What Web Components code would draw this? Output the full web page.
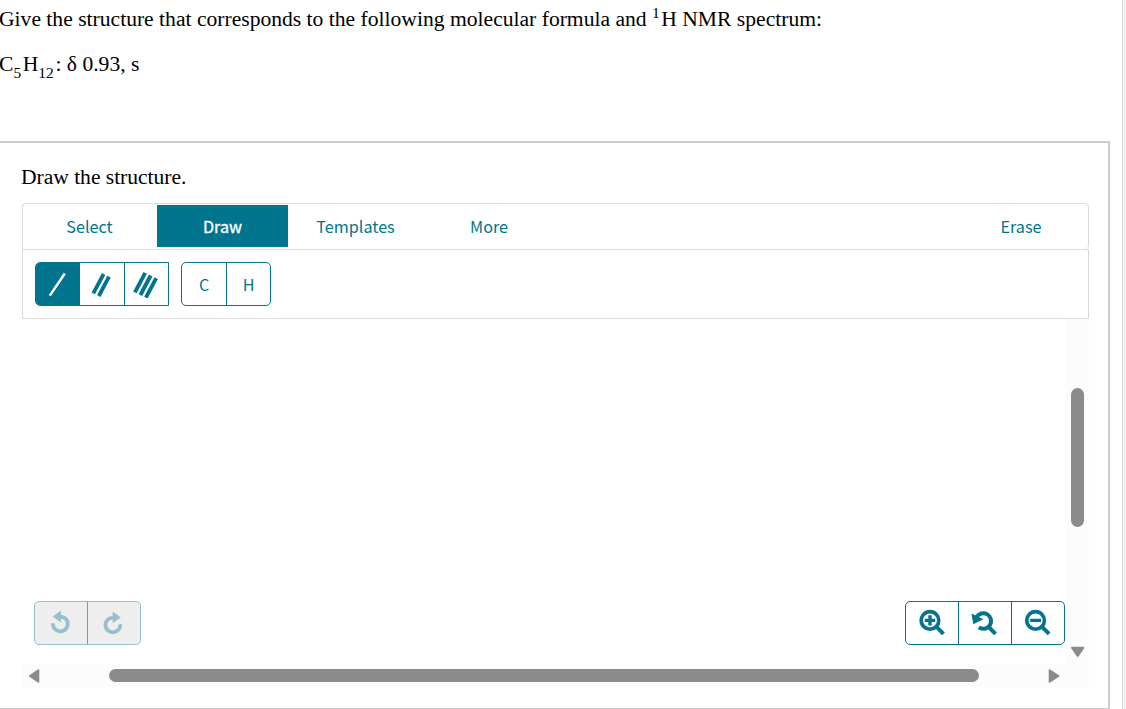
<!DOCTYPE html>
<html lang="en">
<head>
<meta charset="utf-8">
<title>Structure question</title>
<style>
    body {
      margin: 0;
      height: 709px;
      overflow: hidden;
      background: #f1f1f1;
      color: #000;
      font-family: "Liberation Serif", serif;
      font-size: 21.6px;
    }
    sub, sup {
      font-size: 15.5px;
      line-height: 0;
    }
    sub {
      position: relative;
      top: 2px;
      margin-right: 1.6px;
    }
    sup {
      margin-right: 1.5px;
    }
</style>
</head>
<body>
<question-page>
    <question-line>Give the structure that corresponds to the following molecular formula and <sup>1</sup>H NMR spectrum:</question-line>
    <question-line>C<sub>5</sub>H<sub>12</sub>: δ 0.93, s</question-line>
    <answer-panel slot="answer" prompt="Draw the structure.">
        <structure-editor></structure-editor>
    </answer-panel>
</question-page>

<script>
const ICONS = {
    single: `<svg width="44" height="42" viewBox="0 0 44 42"><path d="M13.8 32.6 28.8 10.5" stroke-width="2.5"/></svg>`,
    double: `<svg width="44" height="42" viewBox="0 0 44 42"><path d="M13.3 30.3 23.6 11M18.8 33 29 13.7" stroke-width="3.8"/></svg>`,
    triple: `<svg width="44" height="42" viewBox="0 0 44 42"><path d="M10.9 29.3 21.2 9.8M16.4 32 26.7 12.5M21.9 34.7 32.2 15.2" stroke-width="3.9"/></svg>`,
    undo: `<svg width="52" height="42" viewBox="0 0 52 42"><path d="M18 21.2A7.4 7.4 0 1 0 25.4 14.6" stroke-width="3.8"/><path d="M17.6 14.5 26 8.6V20.4Z" fill="currentColor" stroke="none"/></svg>`,
    redo: `<svg width="52" height="42" viewBox="0 0 52 42"><path d="M32.2 22.3A7.4 7.4 0 1 1 25 15.6" stroke-width="3.8"/><path d="M32.8 15.4 24.7 9.6V21.2Z" fill="currentColor" stroke="none"/></svg>`,
    zoomIn: `<svg width="52" height="42" viewBox="0 0 52 42"><circle cx="24" cy="18.4" r="8.8" stroke-width="3.6"/><path d="M30.2 24.6 37.5 31.9" stroke-width="4"/><path d="M18.8 18.4H29.2M24 13.2V23.6" stroke-width="3.4"/></svg>`,
    zoomReset: `<svg width="52" height="42" viewBox="0 0 52 42"><path d="M17.5 15.2A7.8 7.8 0 1 1 19.8 25.4" stroke-width="4"/><path d="M12.5 11.5 14.3 22.3 24.4 17.2Z" fill="currentColor" stroke="none"/><path d="M29.3 24.6 36.5 31.9" stroke-width="4"/></svg>`,
    zoomOut: `<svg width="52" height="42" viewBox="0 0 52 42"><circle cx="23.6" cy="18.4" r="8.8" stroke-width="3.6"/><path d="M29.8 24.6 37.1 31.9" stroke-width="4"/><path d="M18.2 18.4H29" stroke-width="3.4"/></svg>`
};

class QuestionPage extends HTMLElement {
    constructor() {
        super();
        this.attachShadow({mode: "open"}).innerHTML = `
<style>
    :host {
      display: flex;
      flex-direction: column;
      box-sizing: border-box;
      width: 1123px;
      height: 709px;
      border-right: 1px solid #d9d9d9;
      background: #fff;
      overflow: hidden;
    }
    .text {
      flex: none;
      height: 141px;
    }
</style>
<div class="text"><slot></slot></div>
<slot name="answer"></slot>
`;
    }
}

class QuestionLine extends HTMLElement {
    constructor() {
        super();
        this.attachShadow({mode: "open"}).innerHTML = `
<style>
    :host {
      display: block;
      height: 45px;
      line-height: 38px;
      margin-left: -1px;
      white-space: nowrap;
    }
</style>
<slot></slot>
`;
    }
}

class AnswerPanel extends HTMLElement {
    constructor() {
        super();
        this.attachShadow({mode: "open"}).innerHTML = `
<style>
    :host {
      display: block;
      box-sizing: border-box;
      flex: none;
      width: 1110px;
      height: 569px;
      border: 2px solid #ccc;
      border-left: none;
      padding: 0 0 0 22px;
    }
    .prompt {
      height: 60px;
      line-height: 68px;
      margin-left: -1px;
      letter-spacing: -0.04px;
    }
</style>
<div class="prompt">${this.getAttribute("prompt")}</div>
<slot></slot>
`;
    }
}

class MenuTab extends HTMLElement {
    constructor() {
        super();
        this.attachShadow({mode: "open"}).innerHTML = `
<style>
    :host {
      display: flex;
      align-items: center;
      justify-content: center;
      box-sizing: border-box;
      width: 134px;
      height: 42px;
      color: #00758d;
    }
    :host(:first-child) {
      padding-right: 1px;
    }
    :host([active]) {
      width: 131px;
      background: #00758d;
      color: #fff;
      -webkit-text-stroke: 0.3px #fff;
    }
</style>
<slot></slot>
`;
    }
}

class ButtonGroup extends HTMLElement {
    constructor() {
        super();
        this.attachShadow({mode: "open"}).innerHTML = `
<style>
    :host {
      display: flex;
      box-sizing: border-box;
      height: 44px;
      border: 1px solid #00758d;
      border-radius: 5px;
      background: #fff;
      color: #00758d;
      overflow: hidden;
      --divider: #00758d;
    }
    :host([square]) {
      border-radius: 5px 0 0 5px;
    }
    :host([disabled]) {
      border-color: #95c1ca;
      background: #eee;
      color: #95c1ca;
      --divider: #5fa6b4;
    }
</style>
<slot></slot>
`;
    }
}

class ToolButton extends HTMLElement {
    constructor() {
        super();
        const icon = ICONS[this.getAttribute("icon")] || "";
        this.attachShadow({mode: "open"}).innerHTML = `
<style>
    :host {
      display: flex;
      box-sizing: border-box;
      align-items: center;
      justify-content: center;
      flex: 1;
      min-width: 0;
    }
    :host(:not(:first-child)) {
      border-left: 1px solid var(--divider);
    }
    :host(:not([icon])) {
      padding-left: 1px;
    }
    :host([active]) {
      background: #00758d;
      color: #fff;
    }
    svg {
      flex: none;
      fill: none;
      stroke: currentColor;
    }
</style>
${icon}<slot></slot>
`;
    }
}

class ScrollTrack extends HTMLElement {
    constructor() {
        super();
        this.attachShadow({mode: "open"}).innerHTML = `
<style>
    :host {
      display: flex;
      align-items: center;
      box-sizing: border-box;
      background: #fcfcfc;
    }
    .thumb {
      border-radius: 7px;
      background: #8b8b8b;
    }
    svg {
      flex: none;
      fill: #8b8b8b;
      stroke: #8b8b8b;
      stroke-width: 2;
      stroke-linejoin: round;
    }
    :host([vertical]) {
      flex-direction: column;
      justify-content: space-between;
      padding: 69px 0 6px;
    }
    :host([vertical]) .thumb {
      width: 13px;
      height: 139px;
    }
    :host([vertical]) .back,
    :host([vertical]) .forward,
    :host(:not([vertical])) .down {
      display: none;
    }
    :host(:not([vertical])) {
      justify-content: space-between;
      padding: 0 29px 0 6px;
    }
    :host(:not([vertical])) .thumb {
      width: 870px;
      height: 13px;
      margin-left: -1px;
    }
</style>
<svg class="back" width="12" height="14" viewBox="0 0 12 14"><path d="M10.3 1.3V12.7L2 7Z"/></svg>
<div class="thumb"></div>
<svg class="forward" width="12" height="14" viewBox="0 0 12 14"><path d="M1.7 1.3V12.7L10.4 7Z"/></svg>
<svg class="down" width="14" height="12" viewBox="0 0 14 12"><path d="M1 1.8H12.4L6.7 10Z"/></svg>
`;
    }
}

class StructureEditor extends HTMLElement {
    constructor() {
        super();
        this.attachShadow({mode: "open"}).innerHTML = `
<style>
    :host {
      display: block;
      width: 1067px;
      font: 16.2px/24px "Noto Sans CJK SC", sans-serif;
    }
    .tabs {
      display: flex;
      box-sizing: border-box;
      height: 46px;
      padding-top: 1px;
      border: 1px solid #dbdbdb;
      border-bottom: none;
      border-radius: 4px 4px 4px 0;
    }
    .templates {
      padding-left: 1px;
    }
    .erase {
      margin-left: auto;
    }
    .tools {
      display: flex;
      gap: 12px;
      box-sizing: border-box;
      height: 70px;
      padding: 12px;
      border: 1px solid #dbdbdb;
    }
    .bonds {
      width: 134px;
    }
    .atoms {
      width: 90px;
    }
    .viewport {
      display: grid;
      grid-template: 345px 23px / 1044px 23px;
    }
    .canvas {
      display: flex;
      align-items: flex-end;
      justify-content: space-between;
      padding: 0 1px 19px 12px;
    }
    .history {
      width: 107px;
    }
    .zoom {
      width: 160px;
    }
    .horizontal {
      grid-column: 1 / 3;
    }
</style>
<div class="tabs">
    <menu-tab>Select</menu-tab>
    <menu-tab active>Draw</menu-tab>
    <menu-tab class="templates">Templates</menu-tab>
    <menu-tab>More</menu-tab>
    <menu-tab class="erase">Erase</menu-tab>
</div>
<div class="tools">
    <button-group class="bonds" square>
        <tool-button icon="single" active></tool-button>
        <tool-button icon="double"></tool-button>
        <tool-button icon="triple"></tool-button>
    </button-group>
    <button-group class="atoms">
        <tool-button>C</tool-button>
        <tool-button>H</tool-button>
    </button-group>
</div>
<div class="viewport">
    <div class="canvas">
        <button-group class="history" disabled>
            <tool-button icon="undo"></tool-button>
            <tool-button icon="redo"></tool-button>
        </button-group>
        <button-group class="zoom">
            <tool-button icon="zoomIn"></tool-button>
            <tool-button icon="zoomReset"></tool-button>
            <tool-button icon="zoomOut"></tool-button>
        </button-group>
    </div>
    <scroll-track vertical></scroll-track>
    <scroll-track class="horizontal"></scroll-track>
</div>
`;
    }
}

customElements.define("question-page", QuestionPage);
customElements.define("question-line", QuestionLine);
customElements.define("answer-panel", AnswerPanel);
customElements.define("menu-tab", MenuTab);
customElements.define("button-group", ButtonGroup);
customElements.define("tool-button", ToolButton);
customElements.define("scroll-track", ScrollTrack);
customElements.define("structure-editor", StructureEditor);
</script>
</body>
</html>
